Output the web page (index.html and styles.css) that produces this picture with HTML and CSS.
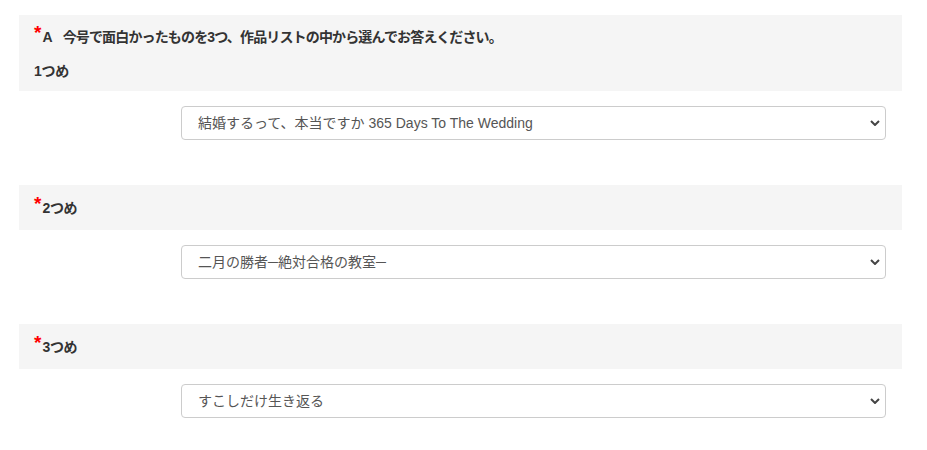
FILE: index.html
```html
<!DOCTYPE html>
<html lang="ja">
<head>
<meta charset="utf-8">
<title>アンケート</title>
<link rel="stylesheet" href="styles.css">
</head>
<body>
<div class="form">
  <div class="question">
    <div class="q-head q-head-first">
      <div class="q-title q-title-long"><span class="req">*</span>A<span class="gap"></span>今号で面白かったものを3つ、作品リストの中から選んでお答えください。</div>
      <div class="q-sub">1つめ</div>
    </div>
    <div class="q-body">
      <select class="select">
        <option>結婚するって、本当ですか 365 Days To The Wedding</option>
      </select>
    </div>
  </div>
  <div class="question">
    <div class="q-head">
      <div class="q-title"><span class="req">*</span>2つめ</div>
    </div>
    <div class="q-body">
      <select class="select">
        <option>二月の勝者─絶対合格の教室─</option>
      </select>
    </div>
  </div>
  <div class="question">
    <div class="q-head">
      <div class="q-title"><span class="req">*</span>3つめ</div>
    </div>
    <div class="q-body">
      <select class="select">
        <option>すこしだけ生き返る</option>
      </select>
    </div>
  </div>
</div>
</body>
</html>
```
FILE: styles.css
```css
* { box-sizing: border-box; }
html, body { margin: 0; padding: 0; background: #fff; }
body {
  font-family: "Liberation Sans", "Noto Sans CJK JP", sans-serif;
  font-size: 14px;
  color: #333;
}
.form {
  padding: 15px 25px 0 19px;
}
.question {
  margin-bottom: 45px;
}
.q-head {
  background: #f5f5f5;
  padding: 13px 15px 12px;
}
.q-head-first {
  padding-top: 12px;
  padding-bottom: 10px;
}
.q-title, .q-sub {
  font-weight: bold;
  line-height: 20px;
  letter-spacing: -0.3px;
}
.q-title-long { letter-spacing: -0.85px; }
.q-sub { margin-top: 14px; }
.req {
  color: #f00;
  font-size: 19px;
  position: relative;
  top: -3px;
  line-height: 0;
  margin-right: 1px;
  letter-spacing: 0;
}
.gap { display: inline-block; width: 11px; }
.q-body {
  padding: 15px 16px 0 162px;
}
.select {
  display: block;
  width: 100%;
  height: 34px;
  margin: 0;
  padding: 0 30px 0 16px;
  border: 1px solid #ccc;
  border-radius: 4px;
  background-color: #fff;
  background-image: url("data:image/svg+xml,%3Csvg xmlns='http://www.w3.org/2000/svg' width='10' height='6' viewBox='0 0 10 6'%3E%3Cpath d='M1 1l4 4 4-4' fill='none' stroke='%23444' stroke-width='2'/%3E%3C/svg%3E");
  background-repeat: no-repeat;
  background-position: right 5px center;
  font-family: "Liberation Sans", "Noto Sans CJK JP", sans-serif;
  font-size: 14px;
  color: #555;
  -webkit-appearance: none;
  appearance: none;
}
```
